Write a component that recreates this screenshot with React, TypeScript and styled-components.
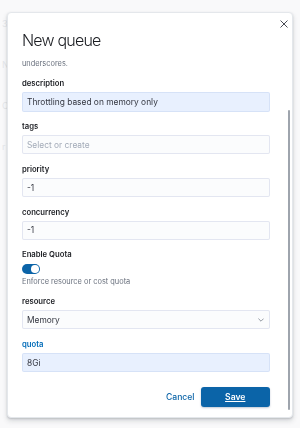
import * as React from "react";
import styled, { createGlobalStyle } from "styled-components";

const GlobalStyle = createGlobalStyle`
  html, body {
    margin: 0;
    height: 100%;
    overflow: hidden;
    font-family: Inter, "Liberation Sans", sans-serif;
    color: #343741;
  }
  #root {
    height: 100%;
  }
`;

const Page = styled.div`
  height: 100%;
  background: #f1f2f4;
  box-sizing: border-box;
  padding: 18px 0 0 2px;
  display: flex;
  flex-direction: column;
  gap: 30px;
  color: #c5c9cf;
  font-size: 9px;
`;

const Overlay = styled.div`
  position: fixed;
  inset: 0;
  background: rgba(255, 255, 255, 0.55);
  display: flex;
  align-items: flex-start;
  justify-content: center;
  padding-top: 12px;
`;

const Modal = styled.div`
  position: relative;
  width: 286px;
  height: 406px;
  box-sizing: border-box;
  background: #fff;
  border: 1px solid #e4e7eb;
  border-radius: 4px;
  box-shadow: 0 3px 5px rgba(60, 66, 80, 0.18), 0 1px 2px rgba(60, 66, 80, 0.2);
  display: flex;
  flex-direction: column;
  overflow: hidden;
`;

const Header = styled.header`
  padding: 16.2px 14px 8.8px;
`;

const Title = styled.h2`
  margin: 0;
  font-size: 16px;
  line-height: 22px;
  font-weight: 300;
  letter-spacing: -0.05em;
  color: #1a1c21;
`;

const CloseButton = styled.button`
  position: absolute;
  top: 3px;
  right: 1px;
  width: 15px;
  height: 15px;
  padding: 0;
  border: none;
  background: none;
  display: grid;
  place-items: center;
  color: #343741;
`;

const ScrollWrap = styled.div`
  position: relative;
  flex: 1;
  min-height: 0;
`;

const Scroll = styled.div`
  height: 100%;
  box-sizing: border-box;
  overflow-y: auto;
  padding: 12px 22px 9.7px 14px;
  scrollbar-width: none;

  &::-webkit-scrollbar {
    display: none;
  }
`;

const Thumb = styled.div`
  position: absolute;
  right: 2px;
  width: 2.4px;
  background: #9ea4ad;
  border-radius: 1px;
`;

const Form = styled.div`
  display: flex;
  flex-direction: column;
  gap: 9.6px;
`;

const Row = styled.div`
  display: flex;
  flex-direction: column;
`;

const Label = styled.label<{ $focused?: boolean }>`
  font-size: 7.7px;
  line-height: 12px;
  font-weight: 600;
  margin-bottom: 2px;
  color: ${(p) => (p.$focused ? "#006bb8" : "#1a1c21")};
`;

const Input = styled.input<{ $filled?: boolean }>`
  height: 19.2px;
  box-sizing: border-box;
  width: 100%;
  border: none;
  border-radius: 2px;
  padding: 0 5px;
  font-family: inherit;
  font-size: 8.4px;
  color: #343741;
  background: ${(p) => (p.$filled ? "#e8f0fe" : "#fbfcfd")};
  box-shadow: inset 0 0 0 1px
    ${(p) => (p.$filled ? "rgba(17, 60, 160, 0.08)" : "rgba(17, 42, 134, 0.1)")};
  outline: none;

  &::placeholder {
    color: #a3abb8;
  }
`;

const Help = styled.div`
  margin-top: 2.6px;
  font-size: 7.4px;
  line-height: 10px;
  color: #69707d;
`;

const Select = styled.div`
  height: 19.2px;
  box-sizing: border-box;
  border-radius: 2px;
  padding: 0 6px 0 5px;
  display: flex;
  align-items: center;
  justify-content: space-between;
  font-size: 8.4px;
  color: #343741;
  background: #fbfcfd;
  box-shadow: inset 0 0 0 1px rgba(17, 42, 134, 0.1);
`;

const Switch = styled.button<{ $on?: boolean }>`
  margin-top: 1px;
  width: 18px;
  height: 9.6px;
  padding: 1px;
  border: none;
  border-radius: 5px;
  background: ${(p) => (p.$on ? "#0b64a8" : "#d3dae6")};
  display: flex;
  justify-content: ${(p) => (p.$on ? "flex-end" : "flex-start")};
  align-items: center;
  box-sizing: border-box;

  &::after {
    content: "";
    width: 7.6px;
    height: 7.6px;
    border-radius: 50%;
    background: #fff;
  }
`;

const Footer = styled.footer`
  margin-top: 14.7px;
  display: flex;
  justify-content: flex-end;
  align-items: center;
  gap: 6px;
`;

const LinkButton = styled.button`
  border: none;
  background: none;
  padding: 0;
  font-family: inherit;
  font-size: 8.6px;
  font-weight: 500;
  color: #0b64a8;
`;

const PrimaryButton = styled.button`
  width: 69.5px;
  height: 20px;
  border: none;
  border-radius: 3px;
  background: #0b64a8;
  color: #fff;
  font-family: inherit;
  font-size: 8.6px;
  font-weight: 600;
  text-decoration: underline;
  box-shadow: 0 1px 2px rgba(0, 40, 90, 0.25);
`;

function Field(props: {
  label: string;
  value?: string;
  placeholder?: string;
  filled?: boolean;
  focused?: boolean;
  help?: React.ReactNode;
}) {
  return (
    <Row>
      <Label $focused={props.focused}>{props.label}</Label>
      <Input
        $filled={props.filled}
        defaultValue={props.value}
        placeholder={props.placeholder}
      />
      {props.help ? <Help>{props.help}</Help> : null}
    </Row>
  );
}

export default function App() {
  const scrollRef = React.useRef<HTMLDivElement>(null);
  const [thumb, setThumb] = React.useState({ top: 0, height: 0 });

  React.useLayoutEffect(() => {
    const el = scrollRef.current;
    if (!el) return;
    el.scrollTop = el.scrollHeight;
    const track = el.clientHeight - 7;
    setThumb({
      top: (el.scrollTop / el.scrollHeight) * track,
      height: (el.clientHeight / el.scrollHeight) * track,
    });
  }, []);

  return (
    <>
      <GlobalStyle />
      <Page>
        <span>3</span>
        <span>N</span>
        <span>C</span>
        <span>r</span>
      </Page>
      <Overlay>
        <Modal>
          <CloseButton aria-label="Close">
            <svg width="8" height="8" viewBox="0 0 8 8" fill="none" stroke="currentColor" strokeWidth="0.9">
              <path d="M0.5 0.5 L7.5 7.5 M7.5 0.5 L0.5 7.5" />
            </svg>
          </CloseButton>
          <Header>
            <Title>New queue</Title>
          </Header>
          <ScrollWrap>
            <Scroll ref={scrollRef}>
              <Form>
                <Field
                  label="name"
                  value="memory_throttle"
                  help={
                    <>
                      Must contain only lowercase letters, numbers, and
                      <br />
                      underscores.
                    </>
                  }
                />
                <Field label="description" value="Throttling based on memory only" filled />
                <Field label="tags" placeholder="Select or create" />
                <Field label="priority" value="-1" />
                <Field label="concurrency" value="-1" />
                <Row>
                  <Label>Enable Quota</Label>
                  <Switch $on aria-label="Enable Quota" />
                  <Help>Enforce resource or cost quota</Help>
                </Row>
                <Row>
                  <Label>resource</Label>
                  <Select>
                    <span>Memory</span>
                    <svg width="6" height="4" viewBox="0 0 6 4" fill="none" stroke="#69707d" strokeWidth="0.7">
                      <path d="M0.4 0.6 L3 3.2 L5.6 0.6" />
                    </svg>
                  </Select>
                </Row>
                <Field label="quota" value="8Gi" filled focused />
              </Form>
              <Footer>
                <LinkButton>Cancel</LinkButton>
                <PrimaryButton>Save</PrimaryButton>
              </Footer>
            </Scroll>
            <Thumb style={{ top: thumb.top, height: thumb.height }} />
          </ScrollWrap>
        </Modal>
      </Overlay>
    </>
  );
}
